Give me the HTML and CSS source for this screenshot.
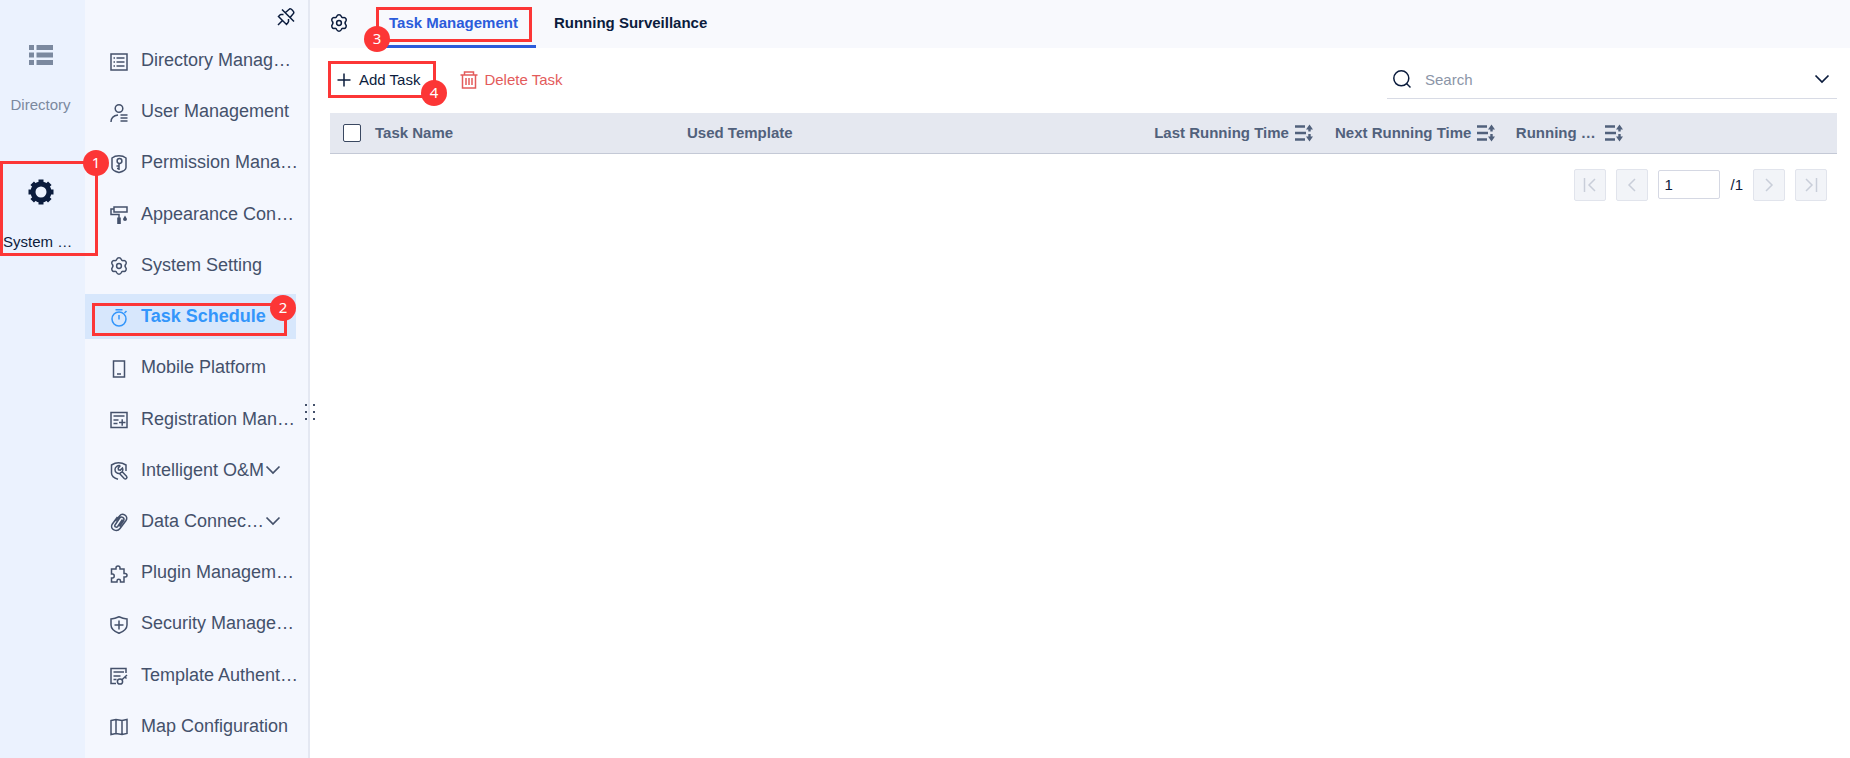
FILE: index.html
```html
<!DOCTYPE html>
<html lang="en">

<head>
    <meta charset="UTF-8">
    <meta name="viewport" content="width=device-width, initial-scale=1.0">
    <title>Task Schedule</title>
    <link rel="stylesheet" href="styles.css">
</head>

<body>
    <!-- shared icon shapes -->
    <svg class="sprite" aria-hidden="true">
        <symbol id="gear" viewBox="0 0 18 18">
            <path d="M6.800 2.200C7.500.4 10.500.4 11.200 2.200c.4 1.200 1.200 1.600 2.400 1.400 2-.4 3.400 2.200 2.200 3.700-.9 1-.9 2.400 0 3.400 1.200 1.500-.2 4.100-2.200 3.700-1.200-.2-2 .2-2.400 1.400-.7 1.800-3.700 1.800-4.400 0-.4-1.200-1.200-1.600-2.400-1.400-2 .4-3.400-2.200-2.200-3.700.9-1 .9-2.400 0-3.400C1 5.800 2.400 3.200 4.400 3.600c1.200.2 2-.2 2.400-1.400z"/>
            <circle cx="9" cy="9" r="2.400"/>
        </symbol>
        <symbol id="chevron" viewBox="0 0 16 16">
            <path d="M1.500 4.500L8 11l6.500-6.500"/>
        </symbol>
        <symbol id="sort" viewBox="0 0 18 18">
            <path d="M0 2.500h10M0 9h11M0 15.500h10M14.500 3v4.500M14.500 10v5"/>
            <path class="solid" d="M14.500 .5l3.500 5h-7zM14.500 17.500l3.500-5h-7z"/>
        </symbol>
    </svg>

    <div class="app">
        <nav class="rail">
            <a class="rail-item" href="#">
                <svg class="rail-icon" viewBox="0 0 26 26">
                    <path class="solid" d="M1 3h5v5H1zM8.500 3H25v5H8.500zM1 10.500h5v5H1zM8.500 10.500H25v5H8.500zM1 18h5v5H1zM8.500 18H25v5H8.500z"/>
                </svg>
                <span>Directory</span>
            </a>
            <a class="rail-item current" href="#">
                <svg class="rail-icon" viewBox="0 0 26 26">
                    <circle cx="13" cy="13" r="8" stroke-width="5"/>
                    <path d="M13 .5v4M13 21.500v4M.5 13h4M21.500 13h4M4.200 4.200L7 7M19 19l2.800 2.800M4.200 21.800L7 19M19 7l2.800-2.800" stroke-width="5"/>
                </svg>
                <span>System …</span>
            </a>
            <div class="mark mark-system"><b class="badge">1</b></div>
        </nav>

        <aside class="sidebar">
            <button class="pin" aria-label="Unpin menu">
                <svg class="icon" viewBox="0 0 18 18">
                    <path d="M1 17l4-4M3.500 6.500L1.500 8.500l8 8 2-2.500M3.500 6.500l3 0M11.500 14v-3M8.500 4.500l4-3.500c1.500-.8 5 2.500 4.200 4.200L13.500 9M5 1.500L17 13.500"/>
                </svg>
            </button>
            <div class="menu">
                <a class="menu-item" href="#">
                    <svg class="icon" viewBox="0 0 18 18"><path d="M1 1h16v16H1zM3.500 5h1.500M6.500 5h8M3.500 9h1.500M6.500 9h8M3.500 13h1.500M6.500 13h8"/></svg>
                    <span>Directory Manag…</span>
                </a>
                <a class="menu-item" href="#">
                    <svg class="icon" viewBox="0 0 18 18"><circle cx="9" cy="4.500" r="3.800"/><path d="M1 18c0-4 3-6.500 7-7M10.500 11h7M10.500 14h7M10.500 17h7"/></svg>
                    <span>User Management</span>
                </a>
                <a class="menu-item" href="#">
                    <svg class="icon" viewBox="0 0 18 18"><path d="M9 .8c2.500 0 5 .6 7 2.200v9.500c0 2.500-3 4-7 4.900-4-.9-7-2.400-7-4.900V3C4 1.400 6.500.8 9 .8z"/><circle cx="9.500" cy="6" r="2.400"/><path d="M9 8.500v6.500M9 11H6.500M9 13.500H7"/></svg>
                    <span>Permission Mana…</span>
                </a>
                <a class="menu-item" href="#">
                    <svg class="icon" viewBox="0 0 18 18"><path d="M4 1h13v5H4zM4 3H1v5.500h8V12"/><path class="solid" d="M7.200 11.500h3.600V18H7.200zM15 9.500l2 3.500a2 2 0 1 1-4 0z"/></svg>
                    <span>Appearance Con…</span>
                </a>
                <a class="menu-item" href="#">
                    <svg class="icon"><use href="#gear"/></svg>
                    <span>System Setting</span>
                </a>
                <a class="menu-item active" href="#">
                    <svg class="icon" viewBox="0 0 18 18"><circle cx="9" cy="10" r="7"/><path d="M5.500 .8h7M9 6v4.500M14.500 4l2-2"/></svg>
                    <span>Task Schedule</span>
                    <span class="mark mark-task"><b class="badge">2</b></span>
                </a>
                <a class="menu-item" href="#">
                    <svg class="icon" viewBox="0 0 18 18"><path d="M3.500 1h11v16h-11zM7 14h4"/></svg>
                    <span>Mobile Platform</span>
                </a>
                <a class="menu-item" href="#">
                    <svg class="icon" viewBox="0 0 18 18"><path d="M1 1.500h16v15H1zM3.500 5h11M3.500 9h5M3.500 12.500h4M9 11.500h6.500M12.200 8.200v6.500"/></svg>
                    <span>Registration Man…</span>
                </a>
                <a class="menu-item" href="#">
                    <svg class="icon" viewBox="0 0 18 18"><path d="M8 17.200C4 16 1.500 14 1.500 11V3C4 1.500 6 .8 8.500.8s5 .7 7.500 2.200v6"/><path d="M10.300 3.800L8.200 6l.3 1.800 1.800.3L12.500 6c1 2-.2 4.300-2 4.800l-.3.700M10.300 3.800C8 3 5 4.700 5 7.500c0 2.500 2 4.300 4.500 4l4.700 5c1.500 1.300 3.700-.7 2.300-2.300L12 9.500"/></svg>
                    <span>Intelligent O&amp;M</span>
                    <svg class="arrow"><use href="#chevron"/></svg>
                </a>
                <a class="menu-item" href="#">
                    <svg class="icon" viewBox="0 0 18 18"><path d="M5.500 8L9.500 3C12.500-1 19 3 16 7.500l-6 8C7 19.500-.5 16.500 2 11.500L7.500 4M12.500 6.500L7.700 13.500c-1.200 1.500-3.700.2-2.700-1.500L9.700 5c1.500-2.200 5.300-.2 4 2.500L9.500 13.500"/></svg>
                    <span>Data Connec…</span>
                    <svg class="arrow"><use href="#chevron"/></svg>
                </a>
                <a class="menu-item" href="#">
                    <svg class="icon" viewBox="0 0 18 18"><path d="M1.500 4H6V3c0-2.700 4-2.700 4 0v1h4v4.500h1c2.700 0 2.700 3.500 0 3.500h-1v5h-3.500v-1c0-2.200-3.500-2.200-3.500 0v1H1.500v-4h1c2.300 0 2.300-4 0-4h-1z"/></svg>
                    <span>Plugin Managem…</span>
                </a>
                <a class="menu-item" href="#">
                    <svg class="icon" viewBox="0 0 18 18"><path d="M9 .8c2.500 1.200 5 2 8 2.200v6c0 4-3.500 6.500-8 8.300C4.500 15.500 1 13 1 9V3c3-.2 5.500-1 8-2.200zM9 4.500v9M4.500 9h9"/></svg>
                    <span>Security Manage…</span>
                </a>
                <a class="menu-item" href="#">
                    <svg class="icon" viewBox="0 0 18 18"><path d="M6 16.500H1v-15h15V6M3.500 5H14M3.500 9h7M3.500 12.500h3M11.700 13L17 8M15 10l1.500 1.500"/><circle cx="10" cy="14.500" r="2.600"/></svg>
                    <span>Template Authent…</span>
                </a>
                <a class="menu-item" href="#">
                    <svg class="icon" viewBox="0 0 18 18"><path d="M1 2.500L6 1.500l6 1 5-1v14l-5 1-6-1-5 1zM6 1.500v14M12 2.500v14"/></svg>
                    <span>Map Configuration</span>
                </a>
            </div>
            <div class="drag"><i></i><i></i><i></i><i></i><i></i><i></i></div>
        </aside>

        <main class="content">
            <header class="tabs">
                <button class="tab-setting" aria-label="Settings"><svg class="icon"><use href="#gear"/></svg></button>
                <a class="tab selected" href="#">Task Management<span class="mark mark-tab"><b class="badge">3</b></span></a>
                <a class="tab" href="#">Running Surveillance</a>
            </header>

            <div class="toolbar">
                <button class="tool add">
                    <svg class="icon" viewBox="0 0 18 18"><path d="M9 2.500v13M2.500 9h13"/></svg>
                    Add Task
                    <span class="mark mark-add"><b class="badge">4</b></span>
                </button>
                <button class="tool delete">
                    <svg class="icon" viewBox="0 0 18 18"><path d="M.5 4h17M4.500 4V1h9v3M2.500 4v13h13V4M6 7v7M9 7v7M12 7v7"/></svg>
                    Delete Task
                </button>
                <div class="search">
                    <svg class="icon" viewBox="0 0 18 18"><circle cx="8.300" cy="8.300" r="7.500"/><path d="M13.500 13.500l4 4"/></svg>
                    <input type="text" placeholder="Search" aria-label="Search">
                    <svg class="arrow"><use href="#chevron"/></svg>
                </div>
            </div>

            <table class="tasks">
                <thead>
                    <tr>
                        <th class="col-check"><input type="checkbox" aria-label="Select all tasks"></th>
                        <th class="col-name">Task Name</th>
                        <th class="col-template">Used Template</th>
                        <th class="col-time"><div class="sortable"><span>Last Running Time</span><svg class="icon sort"><use href="#sort"/></svg></div></th>
                        <th class="col-time"><div class="sortable"><span>Next Running Time</span><svg class="icon sort"><use href="#sort"/></svg></div></th>
                        <th><div class="sortable"><span>Running …</span><svg class="icon sort"><use href="#sort"/></svg></div></th>
                    </tr>
                </thead>
            </table>

            <div class="pager">
                <button disabled aria-label="First page"><svg class="icon" viewBox="0 0 18 18"><path d="M3.500 2v14M14 3L8 9l6 6"/></svg></button>
                <button disabled aria-label="Previous page"><svg class="icon" viewBox="0 0 18 18"><path d="M12 3L6 9l6 6"/></svg></button>
                <input type="text" value="1" aria-label="Page">
                <span>/1</span>
                <button disabled aria-label="Next page"><svg class="icon" viewBox="0 0 18 18"><path d="M6 3l6 6-6 6"/></svg></button>
                <button disabled aria-label="Last page"><svg class="icon" viewBox="0 0 18 18"><path d="M4 3l6 6-6 6M14.500 2v14"/></svg></button>
            </div>
        </main>
    </div>
</body>

</html>
```
FILE: styles.css
```css
* {
    box-sizing: border-box;
}

body {
    margin: 0;
    font-family: "Liberation Sans", Arial, sans-serif;
    font-size: 15px;
    color: #0b1c3d;
    background-color: #fff;
}

a {
    color: inherit;
    text-decoration: none;
}

button,
input {
    font: inherit;
    color: inherit;
}

button {
    border: none;
    padding: 0;
    background: none;
    cursor: pointer;
}

svg {
    fill: none;
    stroke: currentColor;
    flex: none;
}

.solid {
    fill: currentColor;
    stroke: none;
}

.sprite {
    position: absolute;
    width: 0;
    height: 0;
}

.icon {
    width: 18px;
    height: 18px;
    stroke-width: 1.5;
    overflow: visible;
}

.arrow {
    width: 16px;
    height: 16px;
    stroke-width: 1.7;
}

.app {
    display: flex;
    min-height: 100vh;
}

/* left rail */
.rail {
    position: relative;
    flex: none;
    width: 85px;
    padding-top: 42px;
    background-color: #ebf2fe;
}

.rail-item {
    display: flex;
    flex-direction: column;
    align-items: center;
    gap: 28px;
    width: 81px;
    height: 137px;
    line-height: 18px;
    color: #7b899f;
}

.rail-item.current {
    color: #0b1c3d;
}

.rail-item.current span {
    width: 100%;
    padding-left: 3px;
}

.rail-icon {
    width: 26px;
    height: 26px;
}

/* menu */
.sidebar {
    position: relative;
    flex: none;
    display: flex;
    flex-direction: column;
    width: 225px;
    padding-bottom: 9px;
    border-right: 2px solid #e4e8f2;
    background-color: #f4f7fe;
}

.pin {
    align-self: flex-end;
    height: 38px;
    padding: 0 13px 1px;
}

.menu {
    flex: 1;
    display: flex;
    flex-direction: column;
    justify-content: space-between;
}

.menu-item {
    position: relative;
    display: flex;
    align-items: center;
    width: 211px;
    height: 45px;
    padding-left: 25px;
    font-size: 18px;
    line-height: 20px;
    color: #44516b;
    white-space: nowrap;
}

.menu-item span {
    padding-bottom: 1px;
}

.menu-item .icon {
    margin-top: 2px;
    margin-right: 13px;
}

.menu-item .arrow {
    margin-left: 1px;
}

.menu-item.active {
    color: #3396fb;
    font-weight: bold;
    background-color: #d7e7fc;
}

.drag {
    position: absolute;
    right: -7px;
    top: 50%;
    transform: translateY(25px);
    display: grid;
    grid-template-columns: 2px 2px;
    gap: 5px 6px;
}

.drag i {
    width: 2px;
    height: 2px;
    background-color: #44516b;
}

/* content */
.content {
    flex: 1;
    min-width: 0;
}

.tabs {
    display: flex;
    height: 48px;
    padding-left: 20px;
    background-color: #f8f9fd;
}

.tab-setting {
    height: 48px;
    margin-right: 23px;
}

.tab {
    position: relative;
    padding: 0 18px;
    line-height: 46px;
    font-weight: bold;
}

.tab.selected {
    color: #2b5cdb;
    border-bottom: 3px solid #2b5cdb;
}

.toolbar {
    display: flex;
    align-items: center;
    height: 65px;
    padding: 0 13px 2px 20px;
}

.tool {
    position: relative;
    display: flex;
    align-items: center;
    gap: 6px;
    height: 36px;
    padding: 0 5px;
}

.tool.delete {
    margin-left: 30px;
    color: #e35b5b;
}

.search {
    display: flex;
    align-items: center;
    width: 450px;
    height: 38px;
    margin-left: auto;
    padding: 0 7px 0 6px;
    border-bottom: 1px solid #d8dbe5;
}

.search input {
    flex: 1;
    min-width: 0;
    margin: 0 8px 0 13px;
    padding: 0 1px;
    border: none;
    outline: none;
    background: none;
}

.search input::placeholder {
    color: #8b95a7;
}

.tasks {
    width: calc(100% - 33px);
    margin: 0 13px 0 20px;
    table-layout: fixed;
    border-collapse: collapse;
}

.tasks th {
    height: 40px;
    padding: 0;
    text-align: left;
    white-space: nowrap;
    color: #51617c;
    background-color: #e5e8f0;
    border-bottom: 1px solid #c4c9d6;
}

.col-check {
    width: 45px;
}

.col-name {
    width: 312px;
}

.col-template {
    width: 31%;
}

.col-time {
    width: 12%;
}

.col-check input {
    appearance: none;
    display: block;
    width: 18px;
    height: 18px;
    margin: 0 0 0 13px;
    border: 1px solid #3a4861;
    border-radius: 2px;
    background-color: #fff;
}

.sortable {
    display: flex;
    align-items: center;
    gap: 6px;
}

.sortable span {
    min-width: 83px;
}

.sort {
    stroke-width: 2.4;
}

.pager {
    display: flex;
    justify-content: flex-end;
    align-items: center;
    gap: 10px;
    padding: 15px 23px;
}

.pager button {
    display: flex;
    align-items: center;
    justify-content: center;
    width: 32px;
    height: 32px;
    color: #c9ced9;
    border: 1px solid #e1e4ec;
    border-radius: 2px;
    background-color: #f2f4f8;
}

.pager input {
    width: 62px;
    height: 29px;
    padding: 0 5px;
    border: 1px solid #d5d8e3;
    border-radius: 2px;
}

/* numbered callouts */
.mark {
    position: absolute;
    border: 3px solid #fc3636;
    pointer-events: none;
}

.badge {
    position: absolute;
    width: 26px;
    height: 26px;
    border-radius: 50%;
    font-family: "Noto Sans", sans-serif;
    font-size: 15px;
    font-weight: normal;
    line-height: 24px;
    text-align: center;
    color: #fff;
    background-color: #fc3636;
}

.mark-system {
    z-index: 1;
    left: 0;
    top: 161px;
    width: 98px;
    height: 95px;
}

.mark-task {
    left: 7px;
    top: 9px;
    width: 195px;
    height: 33px;
}

.mark-system .badge,
.mark-task .badge {
    right: -14px;
    top: -14px;
}

.mark-task .badge {
    right: -12px;
    top: -11px;
}

.mark-tab {
    left: 5px;
    top: 7px;
    width: 156px;
    height: 35px;
}

.mark-tab .badge {
    left: -15px;
    top: 16px;
}

.mark-add {
    left: -2px;
    top: -1px;
    width: 108px;
    height: 37px;
}

.mark-add .badge {
    right: -14px;
    top: 16px;
}
```
